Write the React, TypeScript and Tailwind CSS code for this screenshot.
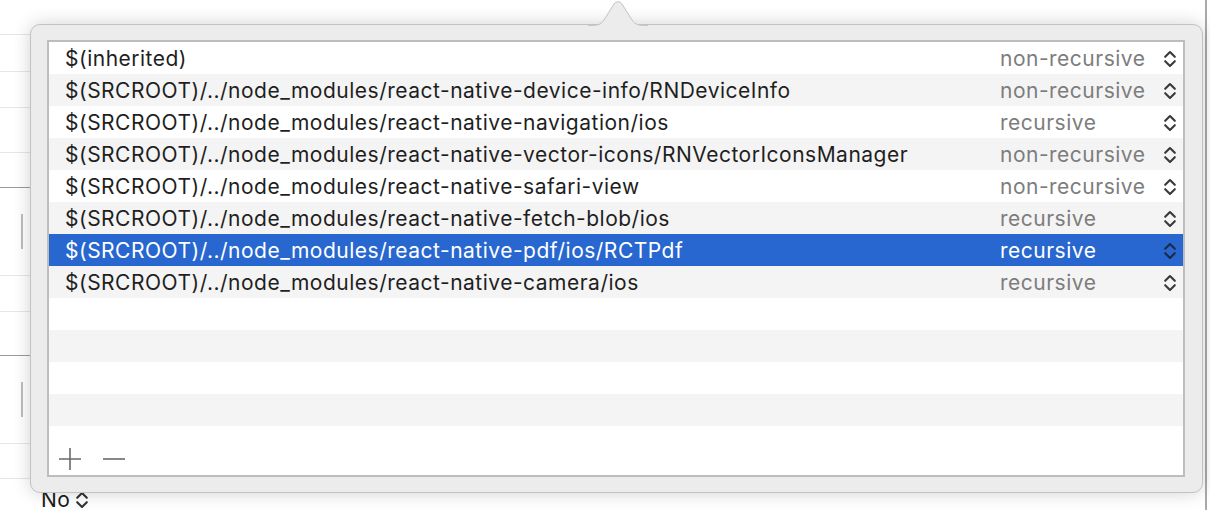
import React from "react";

const rows: { path: string; mode: string }[] = [
  { path: "$(inherited)", mode: "non-recursive" },
  { path: "$(SRCROOT)/../node_modules/react-native-device-info/RNDeviceInfo", mode: "non-recursive" },
  { path: "$(SRCROOT)/../node_modules/react-native-navigation/ios", mode: "recursive" },
  { path: "$(SRCROOT)/../node_modules/react-native-vector-icons/RNVectorIconsManager", mode: "non-recursive" },
  { path: "$(SRCROOT)/../node_modules/react-native-safari-view", mode: "non-recursive" },
  { path: "$(SRCROOT)/../node_modules/react-native-fetch-blob/ios", mode: "recursive" },
  { path: "$(SRCROOT)/../node_modules/react-native-pdf/ios/RCTPdf", mode: "recursive" },
  { path: "$(SRCROOT)/../node_modules/react-native-camera/ios", mode: "recursive" },
];

function Chevrons({ color }: { color: string }) {
  return (
    <svg width="14" height="20" viewBox="0 0 14 20" fill="none">
      <path d="M2.2 7.8 L7 3 L11.8 7.8" stroke={color} strokeWidth="2.1" strokeLinecap="round" strokeLinejoin="round" />
      <path d="M2.2 12.2 L7 17 L11.8 12.2" stroke={color} strokeWidth="2.1" strokeLinecap="round" strokeLinejoin="round" />
    </svg>
  );
}

export default function App() {
  const font = { fontFamily: "Inter, 'Liberation Sans', Arial, sans-serif" };
  return (
    <div className="relative w-[1210px] h-[510px] bg-white overflow-hidden" style={font}>
      {/* background left column */}
      <div className="flex flex-col w-[30px]">
        <div className="h-[35px] border-b border-[#e6e6e6]" />
        <div className="h-[37px] border-b border-[#e6e6e6]" />
        <div className="h-[36px] border-b border-[#e6e6e6]" />
        <div className="h-[45px] border-b border-[#e6e6e6]" />
        <div className="h-[35px] border-b border-[#9a9a9a]" />
        <div className="h-[88px] border-b border-[#e6e6e6] flex items-center justify-end pr-[7px]">
          <div className="w-[2px] h-[35px] bg-[#bdbdbd]" />
        </div>
        <div className="h-[36px] border-b border-[#e6e6e6]" />
        <div className="h-[44px] border-b border-[#9a9a9a]" />
        <div className="h-[88px] border-b border-[#e6e6e6] flex items-center justify-end pr-[7px]">
          <div className="w-[2px] h-[35px] bg-[#bdbdbd]" />
        </div>
        <div className="h-[35px] border-b border-[#e6e6e6]" />
      </div>
      <div className="absolute left-[41px] top-[484px] flex items-center gap-[5px] text-[21px] tracking-[0.5px] text-[#1a1a1a]">
        <span>No</span>
        <Chevrons color="#333" />
      </div>
      {/* right edge line */}
      <div className="absolute right-[3px] top-0 h-full w-[2px] bg-[#a9a9a9]" />

      {/* popover */}
      <div className="absolute left-[30px] top-[24px] w-[1173px] h-[469px] rounded-[10px] bg-[#ececec] border border-[#c2c2c2] shadow-[0_0_18px_rgba(0,0,0,0.18)] flex flex-col pt-[15px] pl-[16px] pr-[17px] pb-[15px]">
        {/* arrow */}
        <svg className="absolute left-[557px] top-[-24px]" width="60" height="26" viewBox="0 0 60 26">
          <path d="M0 24.5 C10 24.5 12 24 16 19 L26 3 C28 0 32 0 34 3 L44 19 C48 24 50 24.5 60 24.5 L60 26 L0 26 Z" fill="#ececec" />
          <path d="M0 24.5 C10 24.5 12 24 16 19 L26 3 C28 0 32 0 34 3 L44 19 C48 24 50 24.5 60 24.5" fill="none" stroke="#c2c2c2" strokeWidth="1" />
        </svg>
        <div className="flex-1 border-2 border-[#bdbdbd] bg-white flex flex-col">
          <div className="flex flex-col">
            {rows.map((r, i) => {
              const sel = i === 6;
              const bg = sel ? "bg-[#2867cf]" : i % 2 === 1 ? "bg-[#f4f4f4]" : "bg-white";
              return (
                <div key={i} className={`h-[32px] pt-[2px] flex items-center ${bg} text-[21px] tracking-[0.5px]`}>
                  <div className={`flex-1 pl-[16px] whitespace-nowrap ${sel ? "text-white" : "text-[#1f1f1f]"}`}>
                    {r.path}
                  </div>
                  <div className="w-[183px] flex items-center pr-[6px]">
                    <span className={`flex-1 ${sel ? "text-white" : "text-[#7d7d7d]"}`}>{r.mode}</span>
                    <Chevrons color={sel ? "#1d2b45" : "#3a3a3a"} />
                  </div>
                </div>
              );
            })}
            {[0, 1, 2, 3].map((i) => (
              <div key={`e${i}`} className={`h-[32px] ${i % 2 === 1 ? "bg-[#f4f4f4]" : "bg-white"}`} />
            ))}
          </div>
          <div className="flex-1 flex items-end pb-[5px] pl-[10px] gap-[22px]">
            <svg width="22" height="22" viewBox="0 0 22 22">
              <path d="M11 0 V22 M0 11 H22" stroke="#6a6a6a" strokeWidth="1.6" />
            </svg>
            <svg width="22" height="22" viewBox="0 0 22 22">
              <path d="M0 11 H22" stroke="#6a6a6a" strokeWidth="1.6" />
            </svg>
          </div>
        </div>
      </div>
    </div>
  );
}
